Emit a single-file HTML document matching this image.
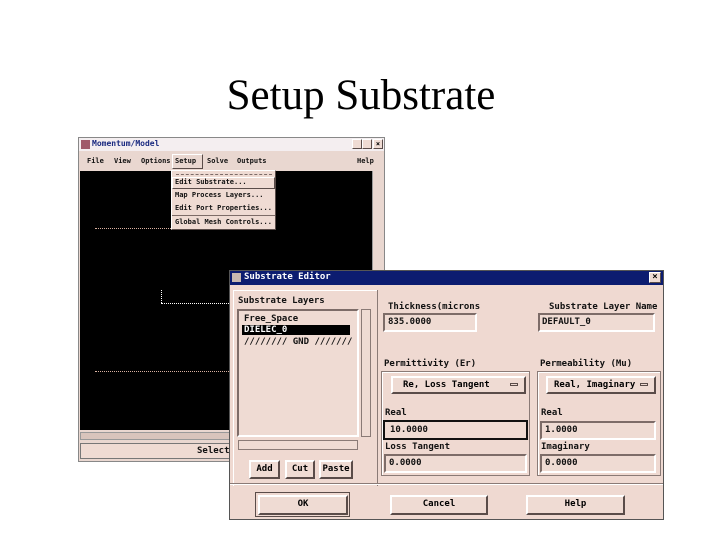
<!DOCTYPE html>
<html><head><style>
body{margin:0;width:720px;height:540px;background:#fff;position:relative;overflow:hidden;font-family:"DejaVu Sans Mono","Liberation Mono",monospace;}
.a{position:absolute;box-sizing:border-box}
.t{position:absolute;font-size:9px;color:#111;white-space:nowrap;font-weight:bold;letter-spacing:0px}
.f{position:absolute;box-sizing:border-box;background:#efdbd3;border:2px solid;border-color:#7d6c68 #fff #fff #7d6c68}
.b{position:absolute;box-sizing:border-box;background:#efdbd3;border:2px solid;border-color:#fff #5a4c49 #5a4c49 #fff;font-size:9px;text-align:center;font-weight:bold;line-height:14px}
.g{position:absolute;box-sizing:border-box;border:1px solid #8a7a76;box-shadow:1px 1px 0 #fff inset}
</style></head><body>
<div class="a" style="left:0;top:71px;width:720px;text-align:center;font-family:'Liberation Serif',serif;font-size:43px;color:#000;padding-left:2px">Setup Substrate</div>

<!-- main window -->
<div class="a" style="left:78px;top:137px;width:307px;height:325px;background:#e9d7d0;border:1px solid #888"></div>
<div class="a" style="left:79px;top:138px;width:305px;height:13px;background:#f4eef0"></div>
<div class="a" style="left:81px;top:140px;width:9px;height:9px;background:#a05a6a"></div>
<div class="t" style="left:92px;top:139px;color:#1a2a80;font-size:8px">Momentum/Model</div>
<div class="b" style="left:352px;top:139px;width:10px;height:10px;border-width:1px"></div>
<div class="b" style="left:362px;top:139px;width:10px;height:10px;border-width:1px"></div>
<div class="b" style="left:373px;top:139px;width:10px;height:10px;border-width:1px;font-size:7px;line-height:8px">×</div>
<div class="t" style="left:87px;top:157px;font-size:7px">File</div>
<div class="t" style="left:114px;top:157px;font-size:7px">View</div>
<div class="t" style="left:141px;top:157px;font-size:7px">Options</div>
<div class="t" style="left:175px;top:157px;font-size:7px">Setup</div>
<div class="t" style="left:207px;top:157px;font-size:7px">Solve</div>
<div class="t" style="left:237px;top:157px;font-size:7px">Outputs</div>
<div class="t" style="left:357px;top:157px;font-size:7px">Help</div>
<div class="a" style="left:172px;top:154px;width:31px;height:15px;border:1px solid;border-color:#fff #5a4c49 #5a4c49 #fff"></div>
<div class="a" style="left:80px;top:171px;width:292px;height:259px;background:#000"></div>
<div class="a" style="left:372px;top:171px;width:10px;height:259px;background:#e9d7d0;border-left:1px solid #999"></div>
<div class="a" style="left:95px;top:228px;width:78px;border-top:1px dotted #d8b0a0"></div>
<div class="a" style="left:161px;top:290px;height:13px;border-left:1px dotted #fff"></div>
<div class="a" style="left:161px;top:303px;width:68px;border-top:1px dotted #fff"></div>
<div class="a" style="left:95px;top:371px;width:134px;border-top:1px dotted #d8b0a0"></div>
<div class="a" style="left:80px;top:432px;width:150px;height:8px;background:#d8c4bc;border:1px solid #999"></div>
<div class="a" style="left:80px;top:443px;width:150px;height:16px;border:1px solid #777;background:#efdbd3"></div>
<div class="t" style="left:197px;top:446px">Select:</div>

<!-- menu -->
<div class="a" style="left:171px;top:170px;width:105px;height:60px;background:#efdbd3;border:1px solid;border-color:#fff #5a4c49 #5a4c49 #fff"></div>
<div class="a" style="left:176px;top:174px;width:96px;border-top:1px dashed #7d6c68"></div>
<div class="a" style="left:172px;top:177px;width:103px;height:12px;border:1px solid;border-color:#fff #5a4c49 #5a4c49 #fff"></div>
<div class="t" style="left:175px;top:178px;font-size:7px">Edit Substrate...</div>
<div class="t" style="left:175px;top:191px;font-size:7px">Map Process Layers...</div>
<div class="t" style="left:175px;top:204px;font-size:7px">Edit Port Properties...</div>
<div class="a" style="left:172px;top:215px;width:103px;border-top:1px solid #7d6c68"></div>
<div class="t" style="left:175px;top:218px;font-size:7px">Global Mesh Controls...</div>

<!-- dialog -->
<div class="a" style="left:229px;top:270px;width:435px;height:250px;background:#efd9d1;border:1px solid #555"></div>
<div class="a" style="left:230px;top:271px;width:433px;height:14px;background:#0c1c70"></div>
<div class="a" style="left:232px;top:273px;width:9px;height:9px;background:#c8b8b0"></div>
<div class="t" style="left:244px;top:272px;color:#fff;font-size:9px">Substrate Editor</div>
<div class="b" style="left:649px;top:272px;width:12px;height:11px;border-width:1px;line-height:8px">×</div>

<div class="g" style="left:233px;top:290px;width:145px;height:196px;border:none;border-right:1px solid #8a7a76"></div>
<div class="t" style="left:238px;top:296px">Substrate Layers</div>
<div class="f" style="left:237px;top:309px;width:122px;height:128px;background:#efdbd3"></div>
<div class="t" style="left:244px;top:314px">Free_Space</div>
<div class="a" style="left:242px;top:325px;width:108px;height:10px;background:#000"></div>
<div class="t" style="left:244px;top:325px;color:#fff">DIELEC_0</div>
<div class="t" style="left:244px;top:337px">//////// GND ///////</div>
<div class="a" style="left:361px;top:309px;width:10px;height:128px;border:1px solid #8a7a76;background:#efdbd3"></div>
<div class="a" style="left:238px;top:440px;width:120px;height:10px;border:1px solid #8a7a76;background:#efdbd3"></div>
<div class="b" style="left:249px;top:460px;width:31px;height:19px">Add</div>
<div class="b" style="left:285px;top:460px;width:30px;height:19px">Cut</div>
<div class="b" style="left:319px;top:460px;width:34px;height:19px">Paste</div>

<div class="t" style="left:388px;top:302px">Thickness(microns</div>
<div class="f" style="left:383px;top:313px;width:94px;height:19px"></div>
<div class="t" style="left:388px;top:317px">835.0000</div>
<div class="t" style="left:549px;top:302px">Substrate Layer Name</div>
<div class="f" style="left:538px;top:313px;width:117px;height:19px"></div>
<div class="t" style="left:542px;top:317px">DEFAULT_0</div>

<div class="t" style="left:384px;top:359px">Permittivity (Er)</div>
<div class="g" style="left:381px;top:371px;width:149px;height:105px"></div>
<div class="b" style="left:391px;top:376px;width:135px;height:18px;text-align:left;padding-left:10px">Re, Loss Tangent</div>
<div class="a" style="left:510px;top:383px;width:8px;height:3px;background:#efdbd3;border:1px solid #5a4c49"></div>
<div class="t" style="left:385px;top:408px">Real</div>
<div class="a" style="left:383px;top:420px;width:145px;height:20px;border:2px solid #111;background:#efdbd3"></div>
<div class="t" style="left:390px;top:425px">10.0000</div>
<div class="t" style="left:385px;top:442px">Loss Tangent</div>
<div class="f" style="left:384px;top:454px;width:143px;height:19px"></div>
<div class="t" style="left:389px;top:458px">0.0000</div>

<div class="t" style="left:540px;top:359px">Permeability (Mu)</div>
<div class="g" style="left:537px;top:371px;width:124px;height:105px"></div>
<div class="b" style="left:546px;top:376px;width:110px;height:18px;text-align:left;padding-left:6px">Real, Imaginary</div>
<div class="a" style="left:640px;top:383px;width:8px;height:3px;background:#efdbd3;border:1px solid #5a4c49"></div>
<div class="t" style="left:541px;top:408px">Real</div>
<div class="f" style="left:540px;top:421px;width:116px;height:19px"></div>
<div class="t" style="left:545px;top:425px">1.0000</div>
<div class="t" style="left:541px;top:442px">Imaginary</div>
<div class="f" style="left:540px;top:454px;width:116px;height:19px"></div>
<div class="t" style="left:545px;top:458px">0.0000</div>

<div class="a" style="left:230px;top:483px;width:433px;border-top:1px solid #8a7a76;border-bottom:1px solid #fff"></div>
<div class="a" style="left:255px;top:492px;width:95px;height:25px;border:1px solid #5a4c49"></div>
<div class="b" style="left:258px;top:495px;width:90px;height:20px">OK</div>
<div class="b" style="left:390px;top:495px;width:98px;height:20px">Cancel</div>
<div class="b" style="left:526px;top:495px;width:99px;height:20px">Help</div>
</body></html>
